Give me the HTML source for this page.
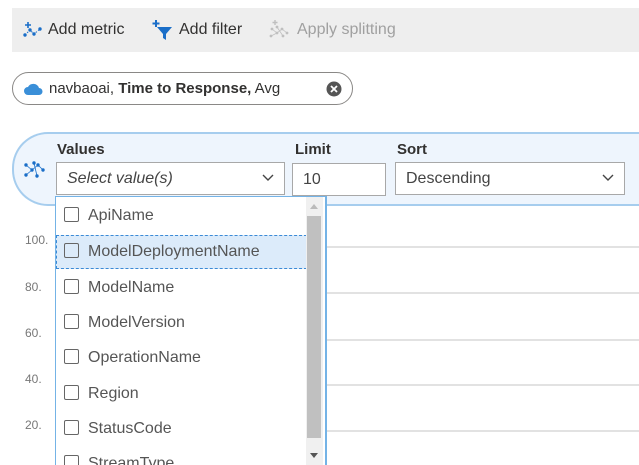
<!DOCTYPE html>
<html><head><style>
*{box-sizing:border-box;margin:0;padding:0}
html,body{width:639px;height:465px;overflow:hidden}
body{background:#fff;font-family:"Liberation Sans",sans-serif;position:relative;color:#323130}
.a{position:absolute}
.tb{left:12px;top:8px;width:627px;height:44px;background:#eeeeee}
.tb span{position:absolute;top:13px;font-size:16px;color:#323130}
.pill{left:12px;top:72px;width:341px;height:33px;border:1px solid #8a8886;border-radius:17px;background:#fff}
.panel{left:12px;top:132px;width:640px;height:74px;background:#eef5fd;border:2px solid #a6cdee;border-right:none;border-radius:36px 0 0 36px}
.lbl{font-size:15px;font-weight:bold;color:#323130}
.inp{background:#fff;border:1px solid #a8a8a8;height:33px;font-size:16px;padding:7px 10px;color:#444}
.grid{left:326px;right:0;height:2px;background:#e2e2e2}
.yl{left:25px;font-size:12px;color:#777}
.dd{left:55px;top:196px;width:272px;height:300px;background:#fff;border:1px solid #74b3e6;border-right:2px solid #74b3e6}
.it{position:absolute;left:8px;font-size:16px;color:#555;height:20px;line-height:20px}
.cb{display:inline-block;width:15px;height:15px;border:1.5px solid #666;border-radius:2px;vertical-align:-2px;margin-right:9px}
</style></head><body>
<div class="a tb">
<svg class="a" style="left:10px;top:13px" width="22" height="18"><g fill="#1a6ec8"><circle cx="3" cy="14" r="1.7"/><circle cx="8" cy="9" r="1.7"/><circle cx="12" cy="13" r="1.7"/><circle cx="18" cy="8" r="1.7"/></g><path d="M3 14L8 9L12 13L18 8" stroke="#1a6ec8" stroke-width="1" fill="none" stroke-dasharray="1.5 1.5"/><path d="M6 1v6M3 4h6" stroke="#1a6ec8" stroke-width="1.6"/></svg>
<span style="left:36px">Add metric</span>
<svg class="a" style="left:138px;top:11px" width="24" height="22"><path d="M6 1v7M2.5 4.5h7" stroke="#1a6ec8" stroke-width="2"/><path d="M7 8h15l-6 7v6l-3-2v-4z" fill="#1a6ec8"/></svg>
<span style="left:167px">Add filter</span>
<svg class="a" style="left:255px;top:12px" width="24" height="20" opacity=".45"><g fill="#888"><circle cx="5" cy="9" r="1.4"/><circle cx="10" cy="13" r="1.4"/><circle cx="15" cy="9" r="1.4"/><circle cx="20" cy="13" r="1.4"/><circle cx="10" cy="7" r="1.4"/><circle cx="16" cy="16" r="1.4"/><circle cx="4" cy="16" r="1.4"/></g><path d="M5 9l5 4 5-4 5 4M10 7l6 9M4 16l6-3" stroke="#888" stroke-width=".8" fill="none"/><path d="M8 0v5M5.5 2.5h5" stroke="#888" stroke-width="1.4"/></svg>
<span style="left:285px;color:#a0a0a0">Apply splitting</span>
</div>
<div class="a pill">
<svg class="a" style="left:11px;top:9px" width="20" height="14"><path d="M4 13a4 4 0 0 1 0-8a6 6 0 0 1 11 1a3.5 3.5 0 0 1 0 7z" fill="#3a8fd8"/></svg>
<span class="a" style="left:36px;top:7px;font-size:15px;white-space:nowrap;color:#323130">navbaoai, <b>Time to Response,</b> Avg</span>
<svg class="a" style="left:313px;top:8px" width="16" height="16"><circle cx="8" cy="8" r="7.5" fill="#555"/><path d="M5 5l6 6M11 5l-6 6" stroke="#fff" stroke-width="1.8"/></svg>
</div>
<div class="a panel"></div>
<svg class="a" style="left:23px;top:160px" width="22" height="20"><g fill="#1a6ec8"><circle cx="3" cy="5" r="1.7"/><circle cx="9" cy="10" r="1.7"/><circle cx="15" cy="5" r="1.7"/><circle cx="20" cy="10" r="1.7"/><circle cx="3" cy="15" r="1.7"/><circle cx="11" cy="3" r="1.7"/><circle cx="14" cy="16" r="1.7"/></g><path d="M3 5l6 5 6-5 5 5M11 3l3 13M3 15l6-5" stroke="#1a6ec8" stroke-width=".8" fill="none"/></svg>
<div class="a lbl" style="left:57px;top:141px">Values</div>
<div class="a lbl" style="left:295px;top:141px">Limit</div>
<div class="a lbl" style="left:397px;top:141px">Sort</div>
<div class="a inp" style="left:56px;top:162px;width:229px;font-style:italic">Select value(s)</div>
<svg class="a" style="left:262px;top:174px" width="12" height="8"><path d="M1 1l5 5 5-5" stroke="#444" stroke-width="1.4" fill="none"/></svg>
<div class="a inp" style="left:292px;top:163px;width:94px">10</div>
<div class="a inp" style="left:395px;top:162px;width:230px">Descending</div>
<svg class="a" style="left:602px;top:174px" width="12" height="8"><path d="M1 1l5 5 5-5" stroke="#444" stroke-width="1.4" fill="none"/></svg>
<div class="a grid" style="top:246px"></div>
<div class="a grid" style="top:292px"></div>
<div class="a grid" style="top:339px"></div>
<div class="a grid" style="top:384px"></div>
<div class="a grid" style="top:430px"></div>
<div class="a yl" style="top:233px">100.</div>
<div class="a yl" style="top:280px">80.</div>
<div class="a yl" style="top:326px">60.</div>
<div class="a yl" style="top:372px">40.</div>
<div class="a yl" style="top:418px">20.</div>
<div class="a dd">
<div class="a" style="left:0;top:38px;width:251px;height:34px;background:#dcebfa;border:1px dashed #3b8ad6"></div>
<div class="it" style="top:9px"><span class="cb"></span>ApiName</div>
<div class="it" style="top:45px"><span class="cb"></span>ModelDeploymentName</div>
<div class="it" style="top:81px"><span class="cb"></span>ModelName</div>
<div class="it" style="top:116px"><span class="cb"></span>ModelVersion</div>
<div class="it" style="top:151px"><span class="cb"></span>OperationName</div>
<div class="it" style="top:187px"><span class="cb"></span>Region</div>
<div class="it" style="top:222px"><span class="cb"></span>StatusCode</div>
<div class="it" style="top:257px"><span class="cb"></span>StreamType</div>
<div class="a" style="left:250px;top:0;width:17px;height:300px;background:#f0f0f0"></div>
<div class="a" style="left:251px;top:19px;width:14px;height:222px;background:#c0c0c0"></div>
<svg class="a" style="left:254px;top:7px" width="8" height="5"><path d="M0 5L4 0L8 5z" fill="#bbb"/></svg>
<svg class="a" style="left:254px;top:256px" width="8" height="5"><path d="M0 0L4 5L8 0z" fill="#555"/></svg>
</div>
</body></html>
